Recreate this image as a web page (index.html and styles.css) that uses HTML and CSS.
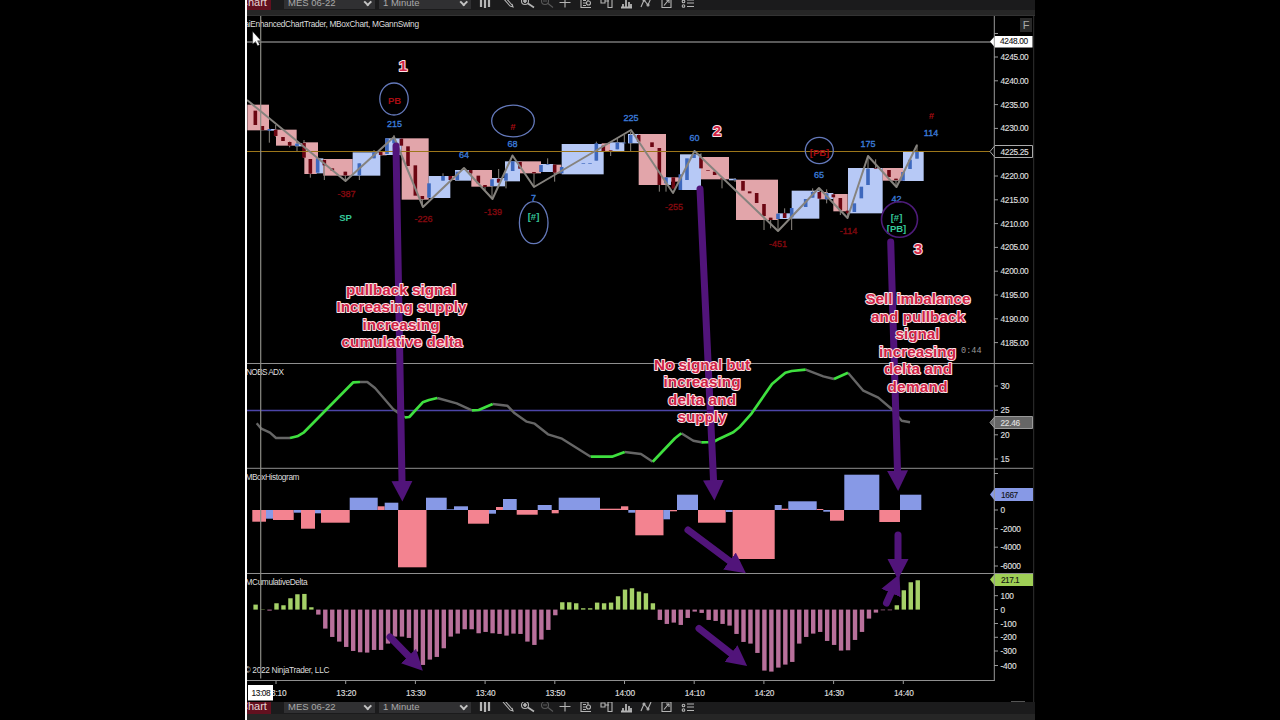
FILE: index.html
```html
<!DOCTYPE html>
<html lang="en">
<head>
    <meta charset="UTF-8">
    <meta name="viewport" content="width=device-width, initial-scale=1.0">
    <title>MES 06-22 Chart</title>
    <link rel="stylesheet" href="styles.css">
</head>
<body>
    <svg class="defs" width="0" height="0">
        <symbol id="tools" viewBox="0 0 220 14">
            <path d="M2 2v9M6 1v11M10 2v9" stroke-width="2.2"/>
            <path d="M24 2l7 8M26 1l7 8M31 10l3 1-1-3"/>
            <circle cx="46" cy="5" r="3.500"/><path d="M44 5h4M46 3v4M49 7.500l6 4" stroke-width="1.700"/>
            <g opacity=".4"><circle cx="66" cy="5" r="3.500"/><path d="M64 5h4M69 7.500l5 4"/></g>
            <path d="M80.500 6.500h11M86 1.500v10"/>
            <path d="M109 5V2h-7v9.500h10M104 4.500h3M104 7h3M104 9.500h3"/><circle cx="109.500" cy="7" r="2"/>
            <path d="M122 3h4v4h-4zM126 5h4M129 2h4v9.500h-4z"/>
            <path d="M142 11.500h11M144 11V8M147 11V4M150 11V6M152 11V8" stroke-width="1.800"/>
            <path d="M162 11l3-7 4 5 3-7"/><circle cx="165" cy="4" r="1"/><circle cx="169" cy="9" r="1"/>
            <path d="M183 2h9v9.500h-9zM185 9.500l5-6M187 4h3v3"/>
            <path d="M208 4h7M208 7h7M208 10.500h7"/><circle cx="204.500" cy="5.500" r="1.300"/><circle cx="204.500" cy="10" r="1.300"/>
        </symbol>
        <marker id="head" markerUnits="userSpaceOnUse" markerWidth="22" markerHeight="24" refX="0" refY="11" orient="auto">
            <path d="M0 .5L20.500 11 0 21.500z" fill="#51147a"/>
        </marker>
    </svg>

    <div class="window">
        <div class="toolbar toolbar-top">
            <div class="toolbar-row">
                <span class="tab">Chart</span>
                <span class="select instrument">MES 06-22<i></i></span>
                <span class="select interval">1 Minute<i></i></span>
                <svg class="tools"><use href="#tools"/></svg>
            </div>
        </div>

        <div class="chart">
            <svg class="pane" viewBox="247 16 788 348" height="348">
                <g id="price"></g>
                <path class="last-price" d="M247 151.500H990"/>
                <path class="swing" d="M247 100L345.500 181 394 137 423 207 464 168 492.500 199 512.500 155.500 534 187 631 130 673 193 694.500 151 778 231 819 188 847.500 218 868 156 896.500 187 917 145"/>
                <path class="cursor-line" d="M247 42H994"/>
                <path class="divider" d="M247 363.500H1033"/>
                <g class="signal up">
                    <text x="394.500" y="127">215</text><text x="464" y="158">64</text><text x="512.500" y="146.500">68</text>
                    <text x="533.500" y="201">7</text><text x="631" y="121">225</text><text x="694.500" y="141">60</text>
                    <text x="819" y="178">65</text><text x="868" y="147">175</text><text x="896.500" y="202">42</text><text x="931" y="135.500">114</text>
                </g>
                <g class="signal down">
                    <text x="346.500" y="196.500">-387</text><text x="423.500" y="222">-226</text><text x="493" y="215">-139</text>
                    <text x="674" y="210">-255</text><text x="778" y="247">-451</text><text x="848.500" y="233.500">-114</text>
                    <text class="mark" x="394.500" y="104">PB</text><text class="mark" x="513" y="129.500">#</text>
                    <text class="mark" x="819.500" y="155.500">[PB]</text><text class="mark" x="931.500" y="119">#</text>
                </g>
                <g class="signal setup">
                    <text x="345.500" y="220.500">SP</text><text x="533.500" y="220">[#]</text>
                    <text x="896.500" y="220.500">[#]</text><text x="896.500" y="232">[PB]</text>
                </g>
                <g class="circles">
                    <ellipse cx="394" cy="99" rx="14.200" ry="16"/>
                    <ellipse cx="513" cy="121" rx="21.300" ry="15.800"/>
                    <ellipse cx="533.700" cy="222.700" rx="14.300" ry="21"/>
                    <ellipse cx="819.300" cy="150.500" rx="14" ry="13.200"/>
                    <ellipse class="purple" cx="899.500" cy="219.500" rx="18" ry="17.800"/>
                </g>
                <text class="pane-name" x="244.500" y="27" textLength="174.500">aiEnhancedChartTrader, MBoxChart, MGannSwing</text>
                <text class="timer" x="961" y="353" textLength="20.500">0:44</text>
                <g id="priceAxis" class="axis"></g>
                <path class="tag-cursor" d="M990 41.500L995 36H1032.500V47.500H995z"/>
                <text class="tag-text" x="1000" y="44.300" textLength="28">4248.00</text>
                <path class="tag-last" d="M990 151.500L995 145.500H1032.500V157.500H995z"/>
                <text class="axis-text" x="1000.500" y="154.500" textLength="28">4225.25</text>
                <rect x="1020" y="18" width="12" height="14" fill="#292929"/>
                <text class="fixed" x="1026" y="29">F</text>
            </svg>

            <svg class="pane" viewBox="247 364 788 105" height="105">
                <path class="level" d="M247 410.500H993"/>
                <path class="adx" d="M256.700 423.300L261.300 428.700 270 432.700 276 438H290M360 382h7.300L375 388 393.300 409.300 400 414.300 405 417.300M437.300 398L456.700 403.300 472 410.300M492.700 404L507.300 405.700 514.700 413.300 526.700 421.700 534.700 423.700 548 434.300 562 438.700 590.700 456.700M624.700 452L641 454 652.700 461.700M681.300 433.300L693.300 440.700 701.300 442.300M805.700 369.700L823.300 376.300 834 379M848 372.700L863.300 390.700 878.300 397.700 891.700 409 901.700 420.700 910 422.300"/>
                <path class="adx rising" d="M290 438L297.300 436.300 304 432.300 353.300 382.300 360 382M405 417.300L409.300 417 422.700 402.300 429 400 437.300 398M472 410.300L478.700 410 492.700 404M590.700 456.700H612L624.700 452M652.700 461.700L675 438.300 681.300 433.300M701.300 442.300L713.300 442 718.300 439.300 733.300 432.300 740 426.700 751.700 413.300 772 384 785.300 372.700 791.700 371 805.700 369.700M834 379L848 372.700"/>
                <path class="divider" d="M247 468.300H1033"/>
                <text class="pane-name" x="246" y="375" textLength="38">NOBS ADX</text>
                <g id="adxAxis" class="axis"></g>
                <path fill="#666" stroke="#999" d="M990 422.500L995 416.500H1032.500V428.500H995z"/>
                <text class="axis-text" x="1000.500" y="425.500" textLength="19.500">22.46</text>
            </svg>

            <svg class="pane" viewBox="247 469 788 105" height="105">
                <g id="histogram"></g>
                <path class="divider" d="M247 573.500H1033"/>
                <text class="pane-name" x="245.500" y="479.500" textLength="54">MBoxHistogram</text>
                <g id="histAxis" class="axis"></g>
                <path fill="#8799e6" d="M990 494.500L995 488H1033V501H995z"/>
                <text class="tag-text" x="1001" y="497.500" textLength="17">1667</text>
            </svg>

            <svg class="pane" viewBox="247 574 788 107" height="107">
                <g id="delta"></g>
                <text class="pane-name" x="245.500" y="584.500" textLength="62">MCumulativeDelta</text>
                <text class="pane-name" x="244.500" y="673" textLength="85">© 2022 NinjaTrader, LLC</text>
                <g id="deltaAxis" class="axis"></g>
                <path fill="#9fcf56" d="M990 579.500L995 573.500H1033V586H995z"/>
                <text class="tag-text" x="1001" y="583" textLength="18.500">217.1</text>
                <path class="divider" d="M247 680.500H994.500"/>
            </svg>

            <svg class="pane" viewBox="247 681 788 21" height="21">
                <g id="timeAxis" class="axis time"></g>
                <rect x="248" y="685" width="25" height="15.500" fill="#fff"/>
                <text class="tag-text" x="251.500" y="695.800" textLength="19">13:08</text>
                <path d="M1011 701.500h14" stroke="#555"/>
            </svg>

            <!-- crosshair, arrows and notes drawn across all panes -->
            <svg class="overlay" viewBox="247 16 788 686">
                <path d="M994.300 16V681" stroke="#999"/>
                <path d="M260.700 16V678.500" stroke="#8c8c86" stroke-width="1.200"/>
                <path d="M1033.700 16V702" stroke="#303030"/>
                <g class="arrows">
                    <path d="M396 146L402 481"/>
                    <path d="M700 189L713.500 480"/>
                    <path d="M890.700 242L897.500 470.500"/>
                    <path d="M688 530L729.500 561"/>
                    <path d="M898 535V559"/>
                    <path d="M886.500 603L891 593"/>
                    <path d="M390 637L408.500 656"/>
                    <path d="M699 628.500L731 653.500"/>
                </g>
                <g class="note">
                    <text x="403" y="71">1</text>
                    <text x="717" y="135.500">2</text>
                    <text x="918" y="254">3</text>
                    <text x="401" y="294.500" textLength="110">pullback signal</text>
                    <text x="401.500" y="312" textLength="130">Increasing supply</text>
                    <text x="401" y="329.500" textLength="77">increasing</text>
                    <text x="402" y="347" textLength="121">cumulative delta</text>
                    <text x="702" y="369.500" textLength="96">No signal but</text>
                    <text x="702" y="387" textLength="77">increasing</text>
                    <text x="702" y="404.500" textLength="68">delta and</text>
                    <text x="702" y="422" textLength="49">supply</text>
                    <text x="918" y="304" textLength="105">Sell imbalance</text>
                    <text x="918" y="321.500" textLength="94">and pullback</text>
                    <text x="917.500" y="339" textLength="44">signal</text>
                    <text x="917.500" y="356.500" textLength="77">increasing</text>
                    <text x="918" y="374" textLength="68">delta and</text>
                    <text x="917.500" y="391.500" textLength="60">demand</text>
                </g>
                <path d="M252.700 31.500V44L255.500 41.500 257.600 45.800 259.600 44.800 257.500 40.800H261z" fill="#fff" stroke="#222" stroke-width=".4"/>
            </svg>
        </div>

        <div class="toolbar toolbar-bottom">
            <div class="toolbar-row">
                <span class="tab">Chart</span>
                <span class="select instrument">MES 06-22<i></i></span>
                <span class="select interval">1 Minute<i></i></span>
                <svg class="tools"><use href="#tools"/></svg>
            </div>
        </div>
    </div>
    <script src="chart.js"></script>
</body>
</html>
```
FILE: styles.css
```css
body {
    margin: 0;
    height: 720px;
    overflow: hidden;
    background-color: #000;
    font-family: "Liberation Sans", Arial, sans-serif;
}
.defs {
    position: absolute;
}
.window {
    width: 788px;
    height: 720px;
    margin-left: 245px;
    border-left: 2px solid #fff;
    display: flex;
    flex-direction: column;
}

/* toolbars */
.toolbar {
    background-color: #262626;
    overflow: hidden;
    box-sizing: border-box;
}
.toolbar-top {
    height: 16px;
    border-bottom: 1px solid #333;
}
.toolbar-bottom {
    height: 18px;
}
.toolbar-row {
    display: flex;
    height: 14px;
    align-items: center;
    background-color: #1b1b1c;
    font-size: 9.5px;
    line-height: 14px;
    color: #a9a9a9;
}
.toolbar-top .toolbar-row {
    margin-top: -4px;
}
.toolbar-bottom .toolbar-row {
    margin-top: -2px;
}
.tab {
    width: 24px;
    height: 14px;
    margin-right: 13px;
    background-color: #62101f;
    color: #e6d4d6;
    font-size: 11px;
    line-height: 13px;
    text-indent: -7px;
    overflow: hidden;
}
.select {
    display: flex;
    justify-content: space-between;
    align-items: center;
    height: 12px;
    padding: 0 5px 0 4px;
    margin-right: 4px;
    box-sizing: border-box;
    background-color: #303032;
}
.instrument {
    width: 91px;
}
.interval {
    width: 92px;
    margin-right: 8px;
}
.select i {
    width: 3.5px;
    height: 3.5px;
    margin-top: -2px;
    border-right: 2px solid #c4c4c4;
    border-bottom: 2px solid #c4c4c4;
    transform: rotate(45deg);
}
.tools {
    width: 220px;
    height: 14px;
    fill: none;
    stroke: #b4b4b4;
    stroke-width: 1.1;
}

/* chart */
.chart {
    position: relative;
    height: 686px;
}
.pane {
    display: block;
    width: 788px;
}
.overlay {
    position: absolute;
    top: 0;
    left: 0;
    width: 788px;
    height: 686px;
}
.divider {
    stroke: #8f8f8f;
}
.cursor-line {
    stroke: #777;
    stroke-width: 1.6;
}
.last-price {
    stroke: #9c761a;
    stroke-width: 1.2;
}
.swing {
    fill: none;
    stroke: #86837e;
    stroke-width: 2;
    stroke-linejoin: round;
}
.level {
    stroke: #4c45a8;
    stroke-width: 1.3;
}
.adx {
    fill: none;
    stroke: #666;
    stroke-width: 2.4;
    stroke-linejoin: round;
}
.rising {
    stroke: #3fe03f;
    stroke-width: 2.7;
}
.box-up { fill: #b7c9f6; }
.box-down { fill: #e2a5aa; }
.candle-up { fill: #3e68bd; }
.candle-down { fill: #6b0612; }
.wick { stroke: #8b8780; stroke-width: 1; }
.hist-up { fill: #8799e6; }
.hist-down { fill: #f38390; }
.delta-up { fill: #a5d168; }
.delta-down { fill: #b8709b; }

/* text */
.signal {
    font-size: 9px;
    text-anchor: middle;
    stroke-width: .35;
}
.up { fill: #3b7bd8; stroke: #3b7bd8; }
.down { fill: #83090f; stroke: #83090f; }
.down .mark { fill: #a80c12; font-size: 9.5px; font-weight: bold; stroke: none; }
.setup { fill: #36c99b; stroke: none; font-size: 9.5px; font-weight: bold; }
.circles {
    fill: none;
    stroke: #6479bb;
    stroke-width: 1.3;
}
.circles .purple {
    stroke: #4d1b79;
    stroke-width: 1.6;
}
.pane-name {
    font-size: 8.3px;
    fill: #ddd;
}
.timer {
    font-family: "Liberation Mono", monospace;
    font-size: 8.5px;
    fill: #999;
}
.fixed {
    font-size: 11px;
    fill: #aaa;
    text-anchor: middle;
}
.axis path {
    stroke: #999;
}
.axis text, .axis-text {
    font-size: 8.3px;
    letter-spacing: -.2px;
    fill: #e0e0e0;
    stroke: #e0e0e0;
    stroke-width: .1;
}
.time text {
    text-anchor: middle;
}
.tag-text {
    font-size: 8.3px;
    letter-spacing: -.2px;
    fill: #111;
    stroke: #111;
    stroke-width: .1;
}
.tag-cursor {
    fill: #fff;
}
.tag-last {
    fill: #000;
    stroke: #aaa;
}
.arrows path {
    fill: none;
    stroke: #51147a;
    stroke-width: 7;
    stroke-linecap: round;
    marker-end: url(#head);
}
.note {
    font-size: 15.3px;
    font-weight: bold;
    text-anchor: middle;
    fill: #ce2346;
    stroke: #ffe3e8;
    stroke-width: 2;
    stroke-linejoin: round;
    paint-order: stroke;
}
```
FILE: chart.js
```javascript
const NS = 'http://www.w3.org/2000/svg';

function add(parent, tag, attrs, text) {
    const el = document.createElementNS(NS, tag);
    for (const key in attrs) el.setAttribute(key, attrs[key]);
    if (text !== undefined) el.textContent = text;
    document.getElementById(parent).appendChild(el);
}

function rect(parent, cls, x1, y1, x2, y2) {
    add(parent, 'rect', { class: cls, x: x1, y: y1, width: x2 - x1, height: y2 - y1 });
}

// Price data in thirds of a pixel, relative to each segment's origin.
// boxes: x1, y1, x2, y2, direction; candles: x, open, close, direction, high, low
const segments = [
    {
        x: 240, y: 60,
        boxes: [
            [22, 134, 87, 211, 0], [87, 207, 108, 212, 1], [108, 209, 170, 257, 0], [165, 250, 192, 259, 1],
            [190, 247, 234, 293, 0], [193, 290, 230, 342, 0], [228, 295, 250, 340, 1], [250, 297, 338, 347, 0],
            [338, 277, 421, 347, 1], [420, 275, 440, 286, 0], [436, 235, 485, 285, 1], [485, 235, 566, 419, 0],
            [566, 348, 631, 414, 1], [631, 348, 648, 360, 0], [645, 330, 693, 362, 1], [694, 330, 756, 380, 0]
        ],
        candles: [
            [46, 152, 195, 0], [67, 198, 210, 0], [88, 207, 212, 1, 206, 248], [107, 209, 228, 0, 195, 230],
            [129, 231, 243, 0], [149, 246, 257, 0, 243, 262], [171, 251, 258, 1, 245, 275], [192, 249, 293, 0, 240, 293],
            [211, 297, 341, 0, 297, 353], [233, 295, 338, 1], [253, 300, 316, 0, 300, 360], [277, 325, 332, 0],
            [316, 335, 346, 0, 335, 363], [358, 310, 346, 1, 310, 360], [402, 277, 295, 1, 270, 295], [422, 276, 285, 0],
            [441, 235, 282, 1], [462, 235, 250, 1, 225, 250], [484, 236, 257, 0], [504, 259, 318, 0], [526, 316, 407, 0],
            [547, 408, 417, 0, 408, 440], [567, 370, 413, 1], [609, 348, 362, 1, 340, 362], [631, 348, 360, 0],
            [652, 335, 360, 1], [692, 330, 340, 0], [715, 347, 370, 0], [735, 375, 381, 0, 375, 390]
        ]
    },
    {
        x: 440, y: 90,
        boxes: [
            [156, 264, 195, 289, 1], [195, 214, 240, 274, 1], [240, 214, 303, 250, 0], [303, 222, 340, 246, 1],
            [340, 224, 364, 250, 0], [365, 162, 491, 253, 1], [485, 160, 511, 184, 0], [510, 157, 553, 184, 1],
            [564, 132, 596, 160, 1], [596, 132, 678, 285, 0], [678, 262, 693, 285, 1], [693, 262, 720, 275, 0],
            [720, 193, 783, 300, 1]
        ],
        candles: [
            [156, 268, 288, 1, 268, 325], [176, 266, 278, 0, 237, 278], [198, 250, 272, 1, 250, 295], [218, 214, 243, 1],
            [240, 216, 236, 0], [282, 246, 250, 0, 246, 290], [303, 225, 246, 1], [323, 222, 224, 1, 205, 224],
            [344, 224, 248, 0, 224, 275], [365, 231, 250, 1], [430, 219, 221, 1], [450, 219, 221, 1],
            [469, 160, 212, 1, 155, 212], [490, 167, 184, 0], [512, 181, 183, 0, 181, 198], [532, 158, 178, 1, 145, 178],
            [553, 158, 160, 1, 135, 160], [572, 135, 159, 1, 125, 185], [596, 135, 155, 0], [636, 157, 171, 0],
            [658, 174, 285, 0, 174, 305], [678, 262, 280, 1, 262, 305], [700, 262, 296, 0], [721, 253, 300, 1],
            [741, 205, 270, 1], [762, 193, 204, 1]
        ]
    },
    {
        x: 620, y: 110,
        boxes: [
            [243, 141, 327, 208, 0], [327, 206, 348, 211, 1], [348, 209, 474, 330, 0], [474, 310, 515, 327, 1],
            [515, 242, 598, 326, 1], [598, 246, 623, 268, 0], [614, 249, 640, 267, 1], [640, 252, 683, 304, 0]
        ],
        candles: [
            [243, 142, 175, 0, 130, 175], [264, 181, 183, 0], [284, 185, 195, 0], [306, 205, 208, 0, 205, 235],
            [345, 208, 210, 1, 204, 216], [369, 213, 242, 0], [389, 244, 250, 0], [410, 249, 279, 0],
            [432, 282, 318, 0, 282, 360], [452, 323, 330, 0, 323, 355], [474, 311, 327, 1, 311, 360],
            [494, 309, 324, 0, 295, 324], [515, 294, 322, 1, 294, 360], [557, 267, 291, 1], [578, 246, 263, 1, 235, 263],
            [598, 246, 266, 0, 235, 266], [620, 250, 268, 1, 238, 280], [640, 253, 262, 0], [661, 264, 301, 0, 264, 315]
        ]
    },
    {
        x: 800, y: 90,
        boxes: [[144, 234, 248, 370, 1], [248, 234, 309, 272, 0], [309, 185, 371, 273, 1]],
        candles: [
            [143, 362, 370, 0, 362, 384], [163, 340, 366, 1], [184, 290, 325, 1], [204, 236, 285, 1, 200, 285],
            [227, 234, 236, 0, 208, 236], [267, 240, 261, 0], [288, 266, 270, 0, 266, 290], [309, 246, 272, 1],
            [330, 209, 237, 1], [351, 186, 206, 1, 163, 206]
        ]
    }
];

for (const s of segments) {
    for (const [x1, y1, x2, y2, up] of s.boxes) {
        rect('price', up ? 'box-up' : 'box-down', s.x + x1 / 3, s.y + y1 / 3, s.x + x2 / 3, s.y + y2 / 3);
    }
    for (const [x, open, close, up, high, low] of s.candles) {
        const cx = s.x + x / 3;
        if (high !== undefined) {
            add('price', 'path', { class: 'wick', d: `M${cx} ${s.y + high / 3}V${s.y + low / 3}` });
        }
        rect('price', up ? 'candle-up' : 'candle-down', cx - 1.8, s.y + open / 3, cx + 1.8, s.y + close / 3);
    }
}

// Box histogram: x1, x2, end y, direction
const histogram = [
    [252.3, 266, 521.7, 0], [266, 273, 518.7, 1], [273, 293.7, 520, 0], [293.7, 301, 512.7, 1], [301, 315, 528.7, 0],
    [315, 321, 513.3, 1], [321, 349.7, 522.7, 0], [349.7, 377.7, 497.7, 1], [377.7, 384.7, 506.3, 0],
    [384.7, 398.3, 502.7, 1], [398, 426.5, 567.3, 0], [426, 446.7, 497.7, 1], [446.7, 454, 509.3, 1],
    [454, 468, 506.3, 1], [468, 489, 523.7, 0], [489, 496, 513.7, 1], [496, 503, 507, 0], [503, 516.7, 499, 1],
    [516.7, 537.7, 514.7, 0], [537.7, 551.7, 505, 1], [551.7, 558.7, 513.3, 0], [558.7, 600, 497.7, 1],
    [600, 621, 508.7, 0], [621, 628.3, 506.3, 0], [628.3, 635.3, 512.7, 1], [635.3, 663.5, 535.3, 0],
    [663.3, 670, 519.3, 1], [670, 677, 511.3, 0], [677, 698, 494.7, 1], [698, 725.7, 522.7, 0], [725.7, 732.7, 512, 1],
    [732.7, 774.7, 559, 0], [774.7, 781.7, 505, 1], [781.7, 788.3, 508.7, 0], [788.3, 816.7, 501.3, 1],
    [816.7, 823.3, 509, 0], [823.3, 830, 511.7, 1], [830, 844, 520.7, 0], [844.3, 879.3, 474.7, 1],
    [879.3, 900, 522, 0], [900, 921.3, 494.7, 1]
];
for (const [x1, x2, y, up] of histogram) {
    rect('histogram', up ? 'hist-up' : 'hist-down', x1, Math.min(y, 510), x2, Math.max(y, 510));
}

// Cumulative delta, one bar a minute from 13:07
const delta = [
    15, 1, -3, 19, 13, 34, 46, 47, 7, -15, -57, -82, -96, -112, -124, -128, -129, -121, -121, -102, -81, -81, -85,
    -126, -166, -150, -142, -116, -81, -72, -59, -59, -71, -67, -71, -73, -78, -72, -73, -96, -106, -90, -61, -17,
    22, 22, 19, 4, 4, 21, 19, 21, 40, 60, 64, 54, 49, 19, -31, -43, -39, -46, -25, -6, -10, -31, -34, -43, -48,
    -73, -97, -102, -130, -183, -186, -174, -165, -157, -102, -82, -72, -67, -94, -106, -123, -122, -91, -67, -27,
    -9, -2, -2, 13, 58, 82, 88
];
delta.forEach((v, i) => {
    const x = 255.6 + i * 6.97;
    rect('delta', v > 0 ? 'delta-up' : 'delta-down', x - 2.2, 609.6 - Math.max(v, 0) / 3, x + 2.2, 609.6 - Math.min(v, 0) / 3);
});

function axis(id, labels) {
    for (const [label, y] of labels) {
        add(id, 'path', { d: `M994 ${y}h4` });
        const attrs = { x: 1000.5, y: y + 3 };
        if (label.length === 7) attrs.textLength = 28;
        add(id, 'text', attrs, label);
    }
}

const prices = [['', 33.5]];
for (let p = 4245; p >= 4185; p -= 5) {
    if (p !== 4225) prices.push([p + '.00', 57 + (4245 - p) * 4.76]);
}
axis('priceAxis', prices);
axis('adxAxis', [['30', 386], ['25', 410.3], ['20', 434.8], ['15', 459]]);
axis('histAxis', [['', 473.5], ['0', 510], ['-2000', 528.7], ['-4000', 547.2], ['-6000', 566]]);
axis('deltaAxis', [['100', 595.7], ['0', 609.5], ['-100', 623.5], ['-200', 637.3], ['-300', 651], ['-400', 665.5]]);

['13:10', '13:20', '13:30', '13:40', '13:50', '14:00', '14:10', '14:20', '14:30', '14:40'].forEach((t, i) => {
    const x = 276 + i * 69.7;
    add('timeAxis', 'path', { d: `M${x} 681v3` });
    add('timeAxis', 'text', { x: x + 0.5, y: 696 }, t);
});
```
